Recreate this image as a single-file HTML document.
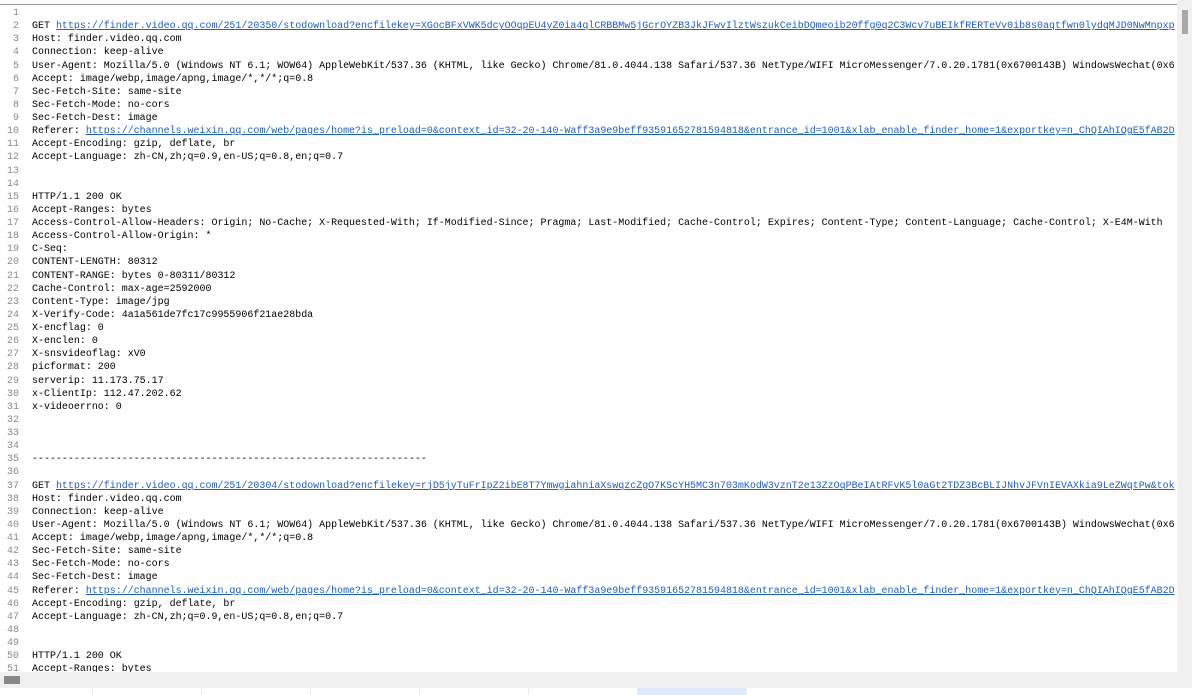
<!DOCTYPE html><html><head><meta charset="utf-8"><style>
body{margin:0;width:1192px;height:695px;overflow:hidden;background:#fff;position:relative;font-family:"Liberation Mono",monospace;font-size:9.97px;color:#000}
#top{position:absolute;left:0;top:0;width:1177px;height:4px;border-bottom:1px solid #999;background:#fff}
#ed{position:absolute;left:0;top:6px;width:1177px;height:666px;overflow:hidden}
.l{height:13.14px;line-height:13.14px;white-space:pre;position:relative}
.n{position:absolute;left:0;width:19px;text-align:right;color:#8a8a8a}
.t{position:absolute;left:32px}
a{color:#1a5fd0;text-decoration:underline}
#vs{position:absolute;left:1177px;top:0;width:15px;height:672px;background:#f0f0f0}
#vt{position:absolute;left:1182px;top:10px;width:6px;height:24px;background:#a8a8a8}
#hs{position:absolute;left:0;top:672px;width:1192px;height:16px;background:#f0f0f0}
#ht{position:absolute;left:4px;top:676px;width:16px;height:8px;background:#888}
#tabs{position:absolute;left:0;top:688px;width:1192px;height:7px;background:#fff}
.tab{position:absolute;top:0;height:7px;border-right:1px solid #eee}
</style></head><body>
<div id="top"></div>
<div id="ed">
<div class="l"><span class="n">1</span></div>
<div class="l"><span class="n">2</span><span class="t">GET <a>https://finder.video.qq.com/251/20350/stodownload?encfilekey=XGocBFxVWK5dcyOOqpEU4yZ0ia4qlCRBBMw5jGcrOYZB3JkJFwvIlztWszukCeibDQmeoib20ffg0q2C3Wcv7uBEIkfRERTeVv0ib8s0aqtfwn0lydqMJD0NwMnpxp</a></span></div>
<div class="l"><span class="n">3</span><span class="t">Host: finder.video.qq.com</span></div>
<div class="l"><span class="n">4</span><span class="t">Connection: keep-alive</span></div>
<div class="l"><span class="n">5</span><span class="t">User-Agent: Mozilla/5.0 (Windows NT 6.1; WOW64) AppleWebKit/537.36 (KHTML, like Gecko) Chrome/81.0.4044.138 Safari/537.36 NetType/WIFI MicroMessenger/7.0.20.1781(0x6700143B) WindowsWechat(0x6</span></div>
<div class="l"><span class="n">6</span><span class="t">Accept: image/webp,image/apng,image/*,*/*;q=0.8</span></div>
<div class="l"><span class="n">7</span><span class="t">Sec-Fetch-Site: same-site</span></div>
<div class="l"><span class="n">8</span><span class="t">Sec-Fetch-Mode: no-cors</span></div>
<div class="l"><span class="n">9</span><span class="t">Sec-Fetch-Dest: image</span></div>
<div class="l"><span class="n">10</span><span class="t">Referer: <a>https://channels.weixin.qq.com/web/pages/home?is_preload=0&amp;context_id=32-20-140-Waff3a9e9beff93591652781594818&amp;entrance_id=1001&amp;xlab_enable_finder_home=1&amp;exportkey=n_ChQIAhIQgE5fAB2D</a></span></div>
<div class="l"><span class="n">11</span><span class="t">Accept-Encoding: gzip, deflate, br</span></div>
<div class="l"><span class="n">12</span><span class="t">Accept-Language: zh-CN,zh;q=0.9,en-US;q=0.8,en;q=0.7</span></div>
<div class="l"><span class="n">13</span></div>
<div class="l"><span class="n">14</span></div>
<div class="l"><span class="n">15</span><span class="t">HTTP/1.1 200 OK</span></div>
<div class="l"><span class="n">16</span><span class="t">Accept-Ranges: bytes</span></div>
<div class="l"><span class="n">17</span><span class="t">Access-Control-Allow-Headers: Origin; No-Cache; X-Requested-With; If-Modified-Since; Pragma; Last-Modified; Cache-Control; Expires; Content-Type; Content-Language; Cache-Control; X-E4M-With</span></div>
<div class="l"><span class="n">18</span><span class="t">Access-Control-Allow-Origin: *</span></div>
<div class="l"><span class="n">19</span><span class="t">C-Seq:</span></div>
<div class="l"><span class="n">20</span><span class="t">CONTENT-LENGTH: 80312</span></div>
<div class="l"><span class="n">21</span><span class="t">CONTENT-RANGE: bytes 0-80311/80312</span></div>
<div class="l"><span class="n">22</span><span class="t">Cache-Control: max-age=2592000</span></div>
<div class="l"><span class="n">23</span><span class="t">Content-Type: image/jpg</span></div>
<div class="l"><span class="n">24</span><span class="t">X-Verify-Code: 4a1a561de7fc17c9955906f21ae28bda</span></div>
<div class="l"><span class="n">25</span><span class="t">X-encflag: 0</span></div>
<div class="l"><span class="n">26</span><span class="t">X-enclen: 0</span></div>
<div class="l"><span class="n">27</span><span class="t">X-snsvideoflag: xV0</span></div>
<div class="l"><span class="n">28</span><span class="t">picformat: 200</span></div>
<div class="l"><span class="n">29</span><span class="t">serverip: 11.173.75.17</span></div>
<div class="l"><span class="n">30</span><span class="t">x-ClientIp: 112.47.202.62</span></div>
<div class="l"><span class="n">31</span><span class="t">x-videoerrno: 0</span></div>
<div class="l"><span class="n">32</span></div>
<div class="l"><span class="n">33</span></div>
<div class="l"><span class="n">34</span></div>
<div class="l"><span class="n">35</span><span class="t">------------------------------------------------------------------</span></div>
<div class="l"><span class="n">36</span></div>
<div class="l"><span class="n">37</span><span class="t">GET <a>https://finder.video.qq.com/251/20304/stodownload?encfilekey=rjD5jyTuFrIpZ2ibE8T7YmwgiahniaXswqzcZgO7KScYH5MC3n703mKodW3vznT2e13ZzOqPBeIAtRFvK5l0aGt2TDZ3BcBLIJNhvJFVnIEVAXkia9LeZWqtPw&amp;tok</a></span></div>
<div class="l"><span class="n">38</span><span class="t">Host: finder.video.qq.com</span></div>
<div class="l"><span class="n">39</span><span class="t">Connection: keep-alive</span></div>
<div class="l"><span class="n">40</span><span class="t">User-Agent: Mozilla/5.0 (Windows NT 6.1; WOW64) AppleWebKit/537.36 (KHTML, like Gecko) Chrome/81.0.4044.138 Safari/537.36 NetType/WIFI MicroMessenger/7.0.20.1781(0x6700143B) WindowsWechat(0x6</span></div>
<div class="l"><span class="n">41</span><span class="t">Accept: image/webp,image/apng,image/*,*/*;q=0.8</span></div>
<div class="l"><span class="n">42</span><span class="t">Sec-Fetch-Site: same-site</span></div>
<div class="l"><span class="n">43</span><span class="t">Sec-Fetch-Mode: no-cors</span></div>
<div class="l"><span class="n">44</span><span class="t">Sec-Fetch-Dest: image</span></div>
<div class="l"><span class="n">45</span><span class="t">Referer: <a>https://channels.weixin.qq.com/web/pages/home?is_preload=0&amp;context_id=32-20-140-Waff3a9e9beff93591652781594818&amp;entrance_id=1001&amp;xlab_enable_finder_home=1&amp;exportkey=n_ChQIAhIQgE5fAB2D</a></span></div>
<div class="l"><span class="n">46</span><span class="t">Accept-Encoding: gzip, deflate, br</span></div>
<div class="l"><span class="n">47</span><span class="t">Accept-Language: zh-CN,zh;q=0.9,en-US;q=0.8,en;q=0.7</span></div>
<div class="l"><span class="n">48</span></div>
<div class="l"><span class="n">49</span></div>
<div class="l"><span class="n">50</span><span class="t">HTTP/1.1 200 OK</span></div>
<div class="l"><span class="n">51</span><span class="t">Accept-Ranges: bytes</span></div>
</div>
<div id="vs"></div><div id="vt"></div>
<div id="hs"></div><div id="ht"></div>
<div id="tabs">
<div class="tab" style="left:0;width:92px"></div>
<div class="tab" style="left:93px;width:108px"></div>
<div class="tab" style="left:202px;width:108px"></div>
<div class="tab" style="left:311px;width:108px"></div>
<div class="tab" style="left:420px;width:108px"></div>
<div class="tab" style="left:529px;width:108px"></div>
<div class="tab" style="left:638px;width:108px;background:#dbe9f8"></div>
</div>
</body></html>
